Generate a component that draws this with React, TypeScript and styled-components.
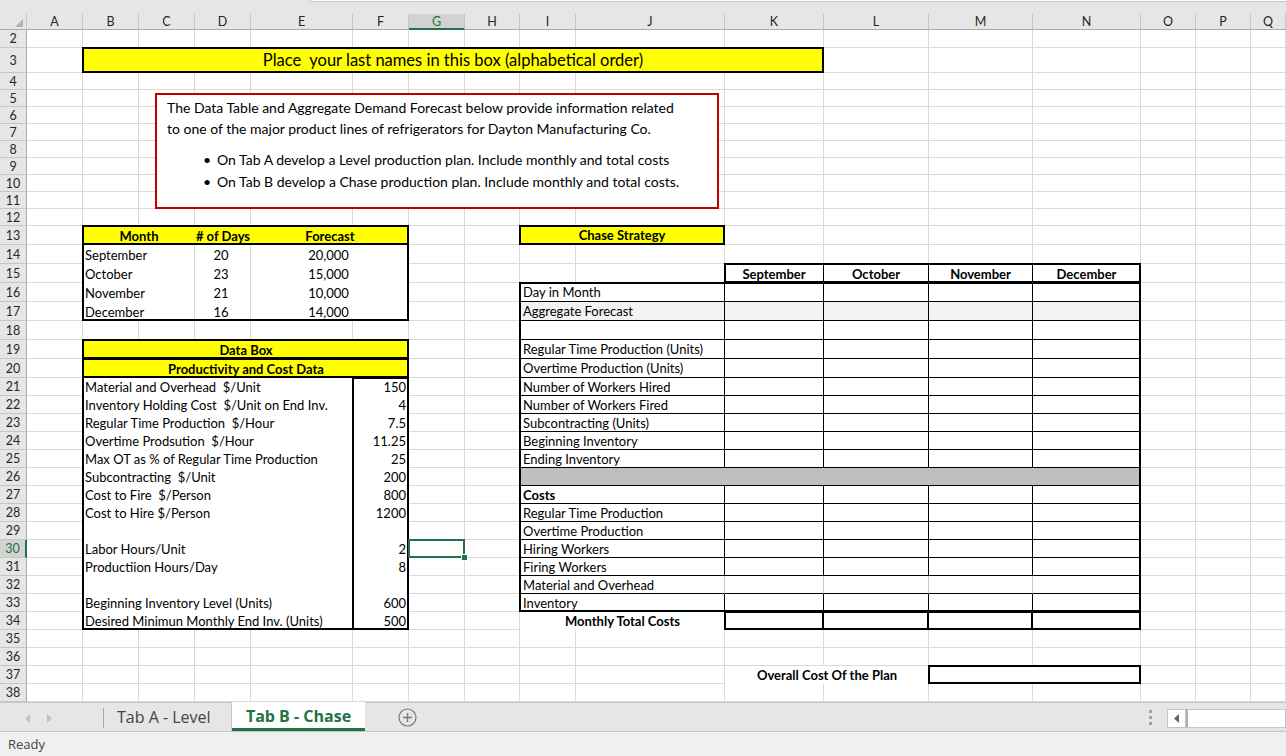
import React from "react";
import styled, { createGlobalStyle, css } from "styled-components";

const GlobalStyle = createGlobalStyle`
  html, body {
    margin: 0;
    padding: 0;
    overflow: hidden;
    background: #fff;
  }
  body {
    font-family: Lato, "Liberation Sans", sans-serif;
    color: #000;
  }
`;

// column widths: row header, then A..Q
const COL_WIDTHS = [27, 56, 56, 56, 56, 102, 56, 56, 55, 56, 149, 99, 105, 104, 108, 55, 55, 35];
const LETTERS = "ABCDEFGHIJKLMNOPQ".split("");
const ROWS = Array.from({ length: 37 }, (_, i) => i + 2);

const rowHeight = (r: number) =>
  r === 2 ? 18 : r === 3 ? 25 : r <= 12 ? 17 : r <= 20 ? 19 : 18;

const col = (l: string) => l.charCodeAt(0) - 63;
const area = (r1: number, c1: string, r2: number = r1, c2: string = c1) =>
  `${r1} / ${col(c1)} / ${r2 + 1} / ${col(c2) + 1}`;

const GREEN = "#217346";
const YELLOW = "#ffff00";

const Window = styled.div`
  width: 1286px;
  height: 756px;
  display: flex;
  flex-direction: column;
  overflow: hidden;
`;

const TopBand = styled.div`
  height: 14px;
  flex: none;
  background: #e6e6e6;
  display: flex;
  align-items: flex-start;
`;

const FormulaEdge = styled.div`
  margin-left: 310px;
  flex: 1;
  height: 1px;
  background: #fff;
  border-left: 1px solid #c6c6c6;
  border-bottom: 1px solid #c6c6c6;
`;

const Sheet = styled.div`
  position: relative;
  flex: none;
  display: grid;
  grid-template-columns: ${COL_WIDTHS.map((w) => `${w}px`).join(" ")};
  grid-template-rows: 16px ${ROWS.map((r) => `${rowHeight(r)}px`).join(" ")};
  height: 688px;
  overflow: hidden;
  background: #fff;
  font-size: 13px;
`;

const Placed = styled.div<{ $area: string }>`
  grid-area: ${({ $area }) => $area};
  box-sizing: border-box;
  min-width: 0;
`;

const Corner = styled(Placed)`
  background: #e6e6e6;
  border-right: 1px solid #c6c6c6;
  border-bottom: 1px solid #ababab;
  display: flex;
  svg {
    display: block;
  }
`;

const ColHeader = styled(Placed)<{ $active?: boolean }>`
  display: flex;
  align-items: center;
  justify-content: center;
  background: ${({ $active }) => ($active ? "#d2d2d2" : "#e6e6e6")};
  border-right: 1px solid #c6c6c6;
  border-bottom: ${({ $active }) => ($active ? `2px solid ${GREEN}` : "1px solid #ababab")};
  color: ${({ $active }) => ($active ? GREEN : "#262626")};
  font-size: 12.5px;
`;

const RowHeader = styled(Placed)<{ $active?: boolean }>`
  display: flex;
  align-items: center;
  justify-content: center;
  background: ${({ $active }) => ($active ? "#d2d2d2" : "#e6e6e6")};
  border-bottom: 1px solid #c6c6c6;
  border-right: ${({ $active }) => ($active ? `2px solid ${GREEN}` : "1px solid #ababab")};
  color: ${({ $active }) => ($active ? GREEN : "#262626")};
  font-size: 12.5px;
`;

const GridCell = styled(Placed)`
  border-right: 1px solid #dadada;
  border-bottom: 1px solid #dadada;
`;

const textCell = css`
  display: flex;
  align-items: center;
  white-space: pre;
  overflow: visible;
  background: #fff;
`;

const NameBox = styled(Placed)`
  ${textCell};
  justify-content: center;
  margin: -1px 0 0 -1px;
  background: ${YELLOW};
  border: 2px solid #000;
  font-size: 16.5px;
`;

const HeadCell = styled(Placed)`
  ${textCell};
  justify-content: center;
  background: ${YELLOW};
  font-weight: 700;
`;

const BoxedHead = styled(HeadCell)`
  margin: -1px 0 0 -1px;
  border: 2px solid #000;
`;

const LabelCell = styled(Placed)<{ $divider?: boolean }>`
  ${textCell};
  padding-left: 2px;
  border-right: ${({ $divider }) => ($divider ? "1px solid #dadada" : "none")};
`;

const ValueCell = styled(Placed)<{ $center?: boolean; $divider?: boolean }>`
  ${textCell};
  justify-content: ${({ $center }) => ($center ? "center" : "flex-end")};
  padding-right: 3px;
  border-right: ${({ $divider }) => ($divider ? "1px solid #dadada" : "none")};
`;

const Frame = styled(Placed)<{ $fill?: string }>`
  margin: -1px 0 0 -1px;
  border: 2px solid #000;
  background: ${({ $fill }) => $fill ?? "transparent"};
  pointer-events: none;
`;

const MonthHead = styled(Placed)`
  ${textCell};
  justify-content: center;
  font-weight: 700;
  border-right: 1px solid #000;
`;

const ChaseLabel = styled(Placed)<{ $shade?: boolean; $bold?: boolean; $soft?: boolean }>`
  ${textCell};
  padding-left: 3px;
  background: ${({ $shade }) => ($shade ? "#f2f2f2" : "#fff")};
  font-weight: ${({ $bold }) => ($bold ? 700 : 400)};
  border-right: 1px solid ${({ $soft }) => ($soft ? "#c8c8c8" : "#000")};
  border-bottom: 1px solid #000;
`;

const ChaseValue = styled(Placed)<{ $shade?: boolean; $soft?: boolean }>`
  background: ${({ $shade }) => ($shade ? "#f2f2f2" : "#fff")};
  border-right: 1px solid ${({ $soft }) => ($soft ? "#c8c8c8" : "#000")};
  border-bottom: 1px solid #000;
`;

const GrayBand = styled(Placed)`
  background: #bfbfbf;
  border-bottom: 1px solid #000;
`;

const TotalLabel = styled(Placed)`
  ${textCell};
  justify-content: center;
  font-weight: 700;
`;

const TotalCell = styled(Placed)`
  background: #fff;
  border-right: 2px solid #000;
`;

const SelectBox = styled(Placed)`
  position: relative;
  margin: -1px 0 0 -1px;
  border: 2px solid ${GREEN};

  &::after {
    content: "";
    position: absolute;
    right: -5px;
    bottom: -5px;
    width: 5px;
    height: 5px;
    background: ${GREEN};
    border: 1px solid #fff;
  }
`;

const Note = styled.div`
  position: absolute;
  left: 155px;
  top: 79px;
  width: 564px;
  height: 116px;
  box-sizing: border-box;
  border: 2px solid #c00000;
  background: #fff;
  padding: 2px 0 0 10px;
  font-size: 14px;
  white-space: nowrap;
`;

const NoteText = styled.p`
  margin: 0;
  line-height: 21px;
`;

const NoteList = styled.ul`
  list-style: none;
  margin: 10px 0 0 36px;
  padding: 0;
`;

const NoteItem = styled.li`
  display: flex;
  line-height: 22px;

  &::before {
    content: "•";
    width: 14px;
    flex: none;
  }
`;

const TabBar = styled.div`
  height: 30px;
  flex: none;
  display: flex;
  align-items: stretch;
  background: #e6e6e6;
  border-top: 1px solid #c6c6c6;
  border-bottom: 1px solid #c6c6c6;
  box-sizing: border-box;
  font-family: "Open Sans", "Liberation Sans", sans-serif;
`;

const NavArrows = styled.div`
  width: 104px;
  flex: none;
  box-sizing: border-box;
  display: flex;
  align-items: center;
  gap: 17px;
  padding-left: 25px;
  margin: 5px 0 3px;
  border-right: 1px solid #a6a6a6;
`;

const SheetTab = styled.div<{ $active?: boolean }>`
  display: flex;
  align-items: center;
  box-sizing: border-box;
  font-size: 16px;
  white-space: nowrap;
  ${({ $active }) =>
    $active
      ? css`
          width: 133px;
          margin-top: -1px;
          justify-content: center;
          background: #fff;
          color: ${GREEN};
          font-weight: 700;
          border-bottom: 3px solid ${GREEN};
          padding-top: 2px;
        `
      : css`
          width: 128px;
          padding-left: 13px;
          color: #444;
          border-right: 1px solid #c6c6c6;
        `}
`;

const AddSheet = styled.div`
  display: flex;
  align-items: center;
  margin-left: 33px;
  flex: 1;
`;

const Grip = styled.div`
  display: flex;
  flex-direction: column;
  justify-content: center;
  gap: 3px;
  margin-right: 15px;

  span {
    width: 3px;
    height: 3px;
    background: #a0a0a0;
  }
`;

const ScrollButton = styled.div`
  width: 19px;
  height: 19px;
  margin-top: 6px;
  box-sizing: border-box;
  background: #fff;
  border: 1px solid #c6c6c6;
  display: flex;
  align-items: center;
  justify-content: center;
`;

const ScrollTrack = styled.div`
  width: 100px;
  height: 19px;
  margin-top: 6px;
  box-sizing: border-box;
  background: #fff;
  border: 1px solid #c6c6c6;
  border-left: 2px solid #b0b0b0;
`;

const StatusBar = styled.div`
  height: 24px;
  flex: none;
  display: flex;
  align-items: center;
  padding-left: 8px;
  background: #f0f0f0;
  color: #444;
  font-family: "Open Sans", "Liberation Sans", sans-serif;
  font-size: 13px;
`;

const FORECAST = [
  ["September", "20", "20,000"],
  ["October", "23", "15,000"],
  ["November", "21", "10,000"],
  ["December", "16", "14,000"],
];

const DATA_BOX: [number, string, string][] = [
  [21, "Material and Overhead  $/Unit", "150"],
  [22, "Inventory Holding Cost  $/Unit on End Inv.", "4"],
  [23, "Regular Time Production  $/Hour", "7.5"],
  [24, "Overtime Prodsution  $/Hour", "11.25"],
  [25, "Max OT as % of Regular Time Production", "25"],
  [26, "Subcontracting  $/Unit", "200"],
  [27, "Cost to Fire  $/Person", "800"],
  [28, "Cost to Hire $/Person", "1200"],
  [29, "", ""],
  [30, "Labor Hours/Unit", "2"],
  [31, "Productiion Hours/Day", "8"],
  [32, "", ""],
  [33, "Beginning Inventory Level (Units)", "600"],
  [34, "Desired Minimun Monthly End Inv. (Units)", "500"],
];

type ChaseRow = { r: number; label: string; kind?: "shade" | "band" | "bold" | "soft" };

const CHASE_ROWS: ChaseRow[] = [
  { r: 16, label: "Day in Month" },
  { r: 17, label: "Aggregate Forecast", kind: "shade" },
  { r: 18, label: "" },
  { r: 19, label: "Regular Time Production (Units)" },
  { r: 20, label: "Overtime Production (Units)" },
  { r: 21, label: "Number of Workers Hired" },
  { r: 22, label: "Number of Workers Fired" },
  { r: 23, label: "Subcontracting (Units)" },
  { r: 24, label: "Beginning Inventory" },
  { r: 25, label: "Ending Inventory" },
  { r: 26, label: "", kind: "band" },
  { r: 27, label: "Costs", kind: "bold" },
  { r: 28, label: "Regular Time Production" },
  { r: 29, label: "Overtime Production" },
  { r: 30, label: "Hiring Workers" },
  { r: 31, label: "Firing Workers" },
  { r: 32, label: "Material and Overhead", kind: "soft" },
  { r: 33, label: "Inventory" },
];

const MONTHS = ["September", "October", "November", "December"];
const MONTH_COLS = ["K", "L", "M", "N"];

const Arrow = ({ dir, color }: { dir: "left" | "right"; color: string }) => (
  <svg width="5" height="9" viewBox="0 0 5 9">
    <polygon points={dir === "left" ? "5,0 5,9 0,4.5" : "0,0 0,9 5,4.5"} fill={color} />
  </svg>
);

const App = () => {
  return (
    <Window>
      <GlobalStyle />
      <TopBand>
        <FormulaEdge />
      </TopBand>

      <Sheet>
        <Corner $area="1 / 1 / 2 / 2">
          <svg width="26" height="15" viewBox="0 0 26 15">
            <polygon points="23,5 23,13 15,13" fill="#b4b4b4" />
          </svg>
        </Corner>
        {LETTERS.map((l) => (
          <ColHeader key={l} $area={`1 / ${col(l)} / 2 / ${col(l) + 1}`} $active={l === "G"}>
            {l}
          </ColHeader>
        ))}
        {ROWS.map((r) => (
          <RowHeader key={r} $area={`${r} / 1 / ${r + 1} / 2`} $active={r === 30}>
            {r}
          </RowHeader>
        ))}
        {ROWS.map((r) =>
          LETTERS.map((l) => <GridCell key={`${l}${r}`} $area={area(r, l)} />)
        )}

        <NameBox $area={area(3, "B", 3, "K")}>
          Place  your last names in this box (alphabetical order)
        </NameBox>

        {/* forecast table */}
        <HeadCell $area={area(13, "B", 13, "C")}>Month</HeadCell>
        <HeadCell $area={area(13, "D")}># of Days</HeadCell>
        <HeadCell $area={area(13, "E", 13, "F")}>Forecast</HeadCell>
        {FORECAST.map(([month, days, units], i) => (
          <React.Fragment key={month}>
            <LabelCell $area={area(14 + i, "B", 14 + i, "C")} $divider>
              {month}
            </LabelCell>
            <ValueCell $area={area(14 + i, "D")} $center $divider>
              {days}
            </ValueCell>
            <ValueCell $area={area(14 + i, "E", 14 + i, "F")} $center>
              {units}
            </ValueCell>
          </React.Fragment>
        ))}
        <Frame $area={area(13, "B", 13, "F")} />
        <Frame $area={area(13, "B", 17, "F")} />

        {/* data box */}
        <HeadCell $area={area(19, "B", 19, "F")}>Data Box</HeadCell>
        <HeadCell $area={area(20, "B", 20, "F")}>Productivity and Cost Data</HeadCell>
        {DATA_BOX.map(([r, label, value]) => (
          <React.Fragment key={r}>
            <LabelCell $area={area(r, "B", r, "E")}>{label}</LabelCell>
            <ValueCell $area={area(r, "F")}>{value}</ValueCell>
          </React.Fragment>
        ))}
        <Frame $area={area(19, "B", 19, "F")} />
        <Frame $area={area(20, "B", 20, "F")} />
        <Frame $area={area(21, "F", 34, "F")} />
        <Frame $area={area(19, "B", 34, "F")} />

        <SelectBox $area={area(30, "G")} />

        {/* chase strategy */}
        <BoxedHead $area={area(13, "I", 13, "J")}>Chase Strategy</BoxedHead>
        {MONTHS.map((m, i) => (
          <MonthHead key={m} $area={area(15, MONTH_COLS[i])}>
            {m}
          </MonthHead>
        ))}
        <Frame $area={area(15, "K", 15, "N")} />

        {CHASE_ROWS.map(({ r, label, kind }) =>
          kind === "band" ? (
            <GrayBand key={r} $area={area(r, "I", r, "N")} />
          ) : (
            <React.Fragment key={r}>
              <ChaseLabel
                $area={area(r, "I", r, "J")}
                $shade={kind === "shade"}
                $bold={kind === "bold"}
                $soft={kind === "soft"}
              >
                {label}
              </ChaseLabel>
              {MONTH_COLS.map((c) => (
                <ChaseValue
                  key={c}
                  $area={area(r, c)}
                  $shade={kind === "shade"}
                  $soft={kind === "soft"}
                />
              ))}
            </React.Fragment>
          )
        )}
        <Frame $area={area(16, "I", 33, "N")} />

        <TotalLabel $area={area(34, "I", 34, "J")}>Monthly Total Costs</TotalLabel>
        {MONTH_COLS.map((c) => (
          <TotalCell key={c} $area={area(34, c)} />
        ))}
        <Frame $area={area(34, "K", 34, "N")} />

        <TotalLabel $area={area(37, "K", 37, "L")}>Overall Cost Of the Plan</TotalLabel>
        <Frame $area={area(37, "M", 37, "N")} $fill="#fff" />

        <Note>
          <NoteText>
            The Data Table and Aggregate Demand Forecast below provide information related
            <br />
            to one of the major product lines of refrigerators for Dayton Manufacturing Co.
          </NoteText>
          <NoteList>
            <NoteItem>On Tab A develop a Level production plan. Include monthly and total costs</NoteItem>
            <NoteItem>On Tab B develop a Chase production plan. Include monthly and total costs.</NoteItem>
          </NoteList>
        </Note>
      </Sheet>

      <TabBar>
        <NavArrows>
          <Arrow dir="left" color="#c0c0c0" />
          <Arrow dir="right" color="#c0c0c0" />
        </NavArrows>
        <SheetTab>Tab A - Level</SheetTab>
        <SheetTab $active>Tab B - Chase</SheetTab>
        <AddSheet>
          <svg width="19" height="19" viewBox="0 0 19 19">
            <circle cx="9.5" cy="9.5" r="8.5" fill="none" stroke="#7a7a7a" strokeWidth="1.2" />
            <path d="M9.5 5v9M5 9.5h9" stroke="#7a7a7a" strokeWidth="1.4" />
          </svg>
        </AddSheet>
        <Grip>
          <span />
          <span />
          <span />
        </Grip>
        <ScrollButton>
          <Arrow dir="left" color="#666" />
        </ScrollButton>
        <ScrollTrack />
      </TabBar>

      <StatusBar>Ready</StatusBar>
    </Window>
  );
};

export default App;
